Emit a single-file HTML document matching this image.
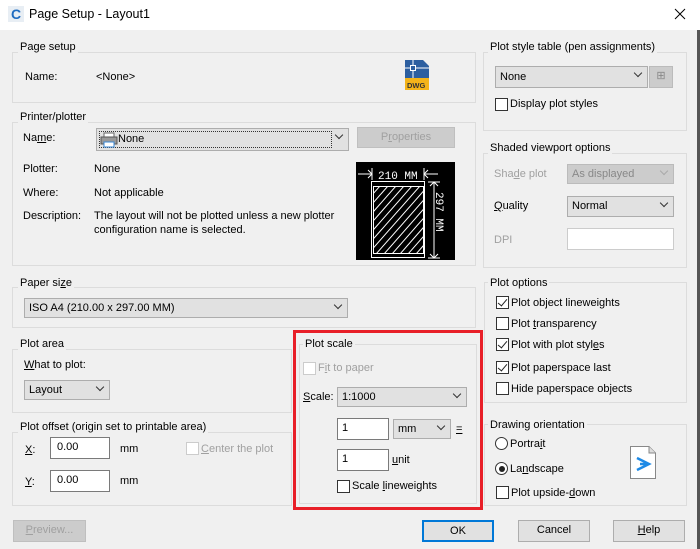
<!DOCTYPE html>
<html><head><meta charset="utf-8"><style>
*{box-sizing:border-box;margin:0;padding:0}
body{width:700px;height:549px;background:#f0f0f0;font-family:"Liberation Sans",sans-serif;font-size:11px;color:#000;position:relative;overflow:hidden}
.a{position:absolute;white-space:nowrap}
.g{position:absolute;border:1px solid #dcdcdc}
.gl{position:absolute;background:#f0f0f0;padding:0 2px;white-space:nowrap}
.cb{position:absolute;background:#e1e1e1;border:1px solid #adadad}
.cb span{position:absolute;left:4px;top:3px}
.cb i{position:absolute;right:6px;top:3px;width:6px;height:6px;border-right:1px solid #333;border-bottom:1px solid #333;transform:rotate(45deg)}
.in{position:absolute;background:#fff;border:1px solid #7a7a7a}
.in span{position:absolute;left:6px;top:3px}
.ck{position:absolute;width:13px;height:13px;border:1px solid #333;background:#fff}
.ck.on::after{content:"";position:absolute;left:3px;top:0px;width:4px;height:8px;border-right:1.5px solid #222;border-bottom:1.5px solid #222;transform:rotate(40deg)}
.dis{color:#a0a0a0}
.btn{position:absolute;background:#e1e1e1;border:1px solid #adadad;text-align:center;line-height:19px}
</style></head><body>
<div class="a" style="left:0;top:0;width:700px;height:30px;background:#fff"></div>
<div class="a" style="left:8px;top:6px;width:16px;height:16px;background:#e8eef4;color:#1f6cc0;font-weight:bold;font-size:14px;text-align:center;line-height:16px">C</div>
<div class="a" style="left:29px;top:7px;font-size:12.5px">Page Setup - Layout1</div>
<svg class="a" style="left:674px;top:8px" width="12" height="12"><path d="M1 1L11 11M11 1L1 11" stroke="#000" stroke-width="1"/></svg>
<div class="a" style="left:697px;top:30px;width:3px;height:519px;background:#555"></div>

<!-- Page setup -->
<div class="g" style="left:12px;top:52px;width:464px;height:51px"></div>
<div class="gl" style="left:18px;top:41px">Page setup</div>
<div class="a" style="left:25px;top:71px">Name:</div>
<div class="a" style="left:96px;top:71px">&lt;None&gt;</div>
<svg class="a" style="left:405px;top:60px" width="24" height="30"><path d="M0 0H18L24 6V30H0Z" fill="#2d5fa0"/><path d="M0 18H24V30H0Z" fill="#f4b41a"/><path d="M0 8H24M8 0V18" stroke="#fff" stroke-width="1"/><rect x="5.5" y="5.5" width="5" height="5" fill="#2d5fa0" stroke="#fff"/><text x="2" y="28" font-size="7.5" font-family="Liberation Sans" font-weight="bold" fill="#333">DWG</text></svg>

<!-- Printer -->
<div class="g" style="left:12px;top:122px;width:464px;height:144px"></div>
<div class="gl" style="left:18px;top:111px">Printer/plotter</div>
<div class="a" style="left:23px;top:132px">Na<u>m</u>e:</div>
<div class="cb" style="left:96px;top:128px;width:253px;height:23px"><div style="position:absolute;left:2px;top:2px;right:16px;bottom:2px;border:1px dotted #333"></div><svg style="position:absolute;left:3px;top:3px" width="18" height="16"><rect x="4" y="1" width="10" height="4" fill="#fff" stroke="#666"/><rect x="1" y="5" width="16" height="7" fill="#999" stroke="#555"/><rect x="4" y="10" width="10" height="5" fill="#fff" stroke="#3a8ad8"/></svg><span style="left:21px;top:4px">None</span><i></i></div>
<div class="btn dis" style="left:357px;top:127px;width:98px;height:21px;background:#ccc;border-color:#bfbfbf">P<u>r</u>operties</div>
<div class="a" style="left:23px;top:163px">Plotter:</div><div class="a" style="left:94px;top:163px">None</div>
<div class="a" style="left:23px;top:187px">Where:</div><div class="a" style="left:94px;top:187px">Not applicable</div>
<div class="a" style="left:23px;top:210px">Description:</div>
<div class="a" style="left:94px;top:210px;line-height:13.5px">The layout will not be plotted unless a new plotter<br>configuration name is selected.</div>
<svg class="a" style="left:356px;top:162px" width="99" height="98"><rect width="99" height="98" fill="#000"/><g stroke="#fff" fill="none"><rect x="15.5" y="19.5" width="53" height="76"/><rect x="17.5" y="24.5" width="50" height="67"/><path d="M2 12H16M12 8L16 12L12 16M16 6V18M68 6V18M68 12H82M72 8L68 12L72 16M72 20H84M72 96H84M78 20V96M74 24L78 20L82 24M74 92L78 96L82 92"/><g clip-path="url(#c)"><path d="M-60 92L0 24M-52 92L8 24M-44 92L16 24M-36 92L24 24M-28 92L32 24M-20 92L40 24M-12 92L48 24M-4 92L56 24M4 92L64 24M12 92L72 24M20 92L80 24M28 92L88 24M36 92L96 24M44 92L104 24M52 92L112 24M60 92L120 24"/></g></g><defs><clipPath id="c"><rect x="18" y="25" width="49" height="66"/></clipPath></defs><text x="22" y="17" fill="#fff" font-size="11" font-family="Liberation Mono">210 MM</text><text x="0" y="0" fill="#fff" font-size="11" font-family="Liberation Mono" transform="translate(80,30) rotate(90)">297 MM</text></svg>

<!-- Paper size -->
<div class="g" style="left:12px;top:287px;width:464px;height:41px"></div>
<div class="gl" style="left:18px;top:277px">Paper si<u>z</u>e</div>
<div class="cb" style="left:24px;top:298px;width:324px;height:20px"><span>ISO A4 (210.00 x 297.00 MM)</span><i></i></div>

<!-- Plot area -->
<div class="g" style="left:12px;top:349px;width:280px;height:64px"></div>
<div class="gl" style="left:18px;top:338px">Plot area</div>
<div class="a" style="left:24px;top:359px"><u>W</u>hat to plot:</div>
<div class="cb" style="left:24px;top:380px;width:86px;height:20px"><span>Layout</span><i></i></div>

<!-- Plot offset -->
<div class="g" style="left:12px;top:432px;width:280px;height:74px"></div>
<div class="gl" style="left:18px;top:421px">Plot offset (origin set to printable area)</div>
<div class="a" style="left:25px;top:444px"><u>X</u>:</div>
<div class="in" style="left:50px;top:437px;width:60px;height:22px"><span>0.00</span></div>
<div class="a" style="left:120px;top:443px">mm</div>
<div class="ck" style="left:186px;top:442px;border-color:#ccc"></div>
<div class="a dis" style="left:201px;top:443px"><u>C</u>enter the plot</div>
<div class="a" style="left:25px;top:476px"><u>Y</u>:</div>
<div class="in" style="left:50px;top:470px;width:60px;height:22px"><span>0.00</span></div>
<div class="a" style="left:120px;top:475px">mm</div>

<!-- Plot scale -->
<div class="g" style="left:299px;top:344px;width:178px;height:160px"></div>
<div class="gl" style="left:303px;top:338px">Plot scale</div>
<div class="a" style="left:293px;top:330px;width:190px;height:180px;border:3px solid #e81f28"></div>
<div class="ck" style="left:303px;top:362px;border-color:#ccc"></div>
<div class="a dis" style="left:318px;top:362px">F<u>i</u>t to paper</div>
<div class="a" style="left:303px;top:391px"><u>S</u>cale:</div>
<div class="cb" style="left:337px;top:387px;width:130px;height:20px"><span>1:1000</span><i></i></div>
<div class="in" style="left:337px;top:418px;width:52px;height:22px"><span style="left:4px">1</span></div>
<div class="cb" style="left:393px;top:419px;width:58px;height:20px"><span>mm</span><i></i></div>
<div class="a" style="left:456px;top:423px"><u>=</u></div>
<div class="in" style="left:337px;top:449px;width:52px;height:22px"><span style="left:4px">1</span></div>
<div class="a" style="left:392px;top:454px"><u>u</u>nit</div>
<div class="ck" style="left:337px;top:480px"></div>
<div class="a" style="left:352px;top:480px">Scale <u>l</u>ineweights</div>

<!-- Right column -->
<div class="g" style="left:483px;top:52px;width:204px;height:79px"></div>
<div class="gl" style="left:488px;top:41px">Plot style table (pen assignments)</div>
<div class="cb" style="left:495px;top:66px;width:153px;height:22px"><span style="top:4px">None</span><i></i></div>
<div class="btn" style="left:649px;top:66px;width:24px;height:22px;background:#ccc;border-color:#bbb;color:#888;line-height:18px">⊞</div>
<div class="ck" style="left:495px;top:98px"></div>
<div class="a" style="left:510px;top:98px">Display plot styles</div>

<div class="g" style="left:483px;top:153px;width:204px;height:115px"></div>
<div class="gl" style="left:488px;top:142px">Shaded viewport options</div>
<div class="a dis" style="left:494px;top:168px">Sha<u>d</u>e plot</div>
<div class="cb" style="left:567px;top:164px;width:107px;height:20px;background:#ccc;border-color:#bbb;color:#888"><span>As displayed</span><i style="border-color:#aaa"></i></div>
<div class="a" style="left:494px;top:200px"><u>Q</u>uality</div>
<div class="cb" style="left:567px;top:196px;width:107px;height:21px"><span>Normal</span><i></i></div>
<div class="a dis" style="left:494px;top:234px">DPI</div>
<div class="in" style="left:567px;top:228px;width:107px;height:22px;border-color:#ccc"></div>

<div class="g" style="left:484px;top:282px;width:203px;height:121px"></div>
<div class="gl" style="left:488px;top:277px">Plot options</div>
<div class="ck on" style="left:496px;top:296px"></div><div class="a" style="left:511px;top:297px">Plot object lineweights</div>
<div class="ck" style="left:496px;top:317px"></div><div class="a" style="left:511px;top:318px">Plot <u>t</u>ransparency</div>
<div class="ck on" style="left:496px;top:338px"></div><div class="a" style="left:511px;top:339px">Plot with plot styl<u>e</u>s</div>
<div class="ck on" style="left:496px;top:361px"></div><div class="a" style="left:511px;top:362px">Plot paperspace last</div>
<div class="ck" style="left:496px;top:382px"></div><div class="a" style="left:511px;top:383px">Hide paperspace objects</div>

<div class="g" style="left:484px;top:424px;width:203px;height:82px"></div>
<div class="gl" style="left:488px;top:419px">Drawing orientation</div>
<div class="a" style="left:495px;top:437px;width:13px;height:13px;border:1px solid #333;border-radius:50%;background:#fff"></div>
<div class="a" style="left:510px;top:438px">Portra<u>i</u>t</div>
<div class="a" style="left:495px;top:462px;width:13px;height:13px;border:1px solid #333;border-radius:50%;background:#fff"><div style="position:absolute;left:2.5px;top:2.5px;width:6px;height:6px;border-radius:50%;background:#222"></div></div>
<div class="a" style="left:510px;top:463px">La<u>n</u>dscape</div>
<div class="ck" style="left:496px;top:486px"></div><div class="a" style="left:511px;top:487px">Plot upside-<u>d</u>own</div>
<svg class="a" style="left:630px;top:446px" width="26" height="33"><path d="M0.5 0.5H19L25.5 7V32.5H0.5Z" fill="#fff" stroke="#888"/><path d="M19 0.5V7H25.5" fill="#ddd" stroke="#888"/><path d="M7 12L19 18L7 24M10 18H17" stroke="#1e8ae6" stroke-width="2.5" fill="none"/></svg>

<!-- Buttons -->
<div class="btn dis" style="left:13px;top:520px;width:73px;height:22px;background:#ccc;border-color:#bfbfbf"><u>P</u>review...</div>
<div class="btn" style="left:422px;top:520px;width:72px;height:22px;border:2px solid #0078d7;line-height:18px">OK</div>
<div class="btn" style="left:518px;top:520px;width:72px;height:22px">Cancel</div>
<div class="btn" style="left:613px;top:520px;width:72px;height:22px"><u>H</u>elp</div>
</body></html>
